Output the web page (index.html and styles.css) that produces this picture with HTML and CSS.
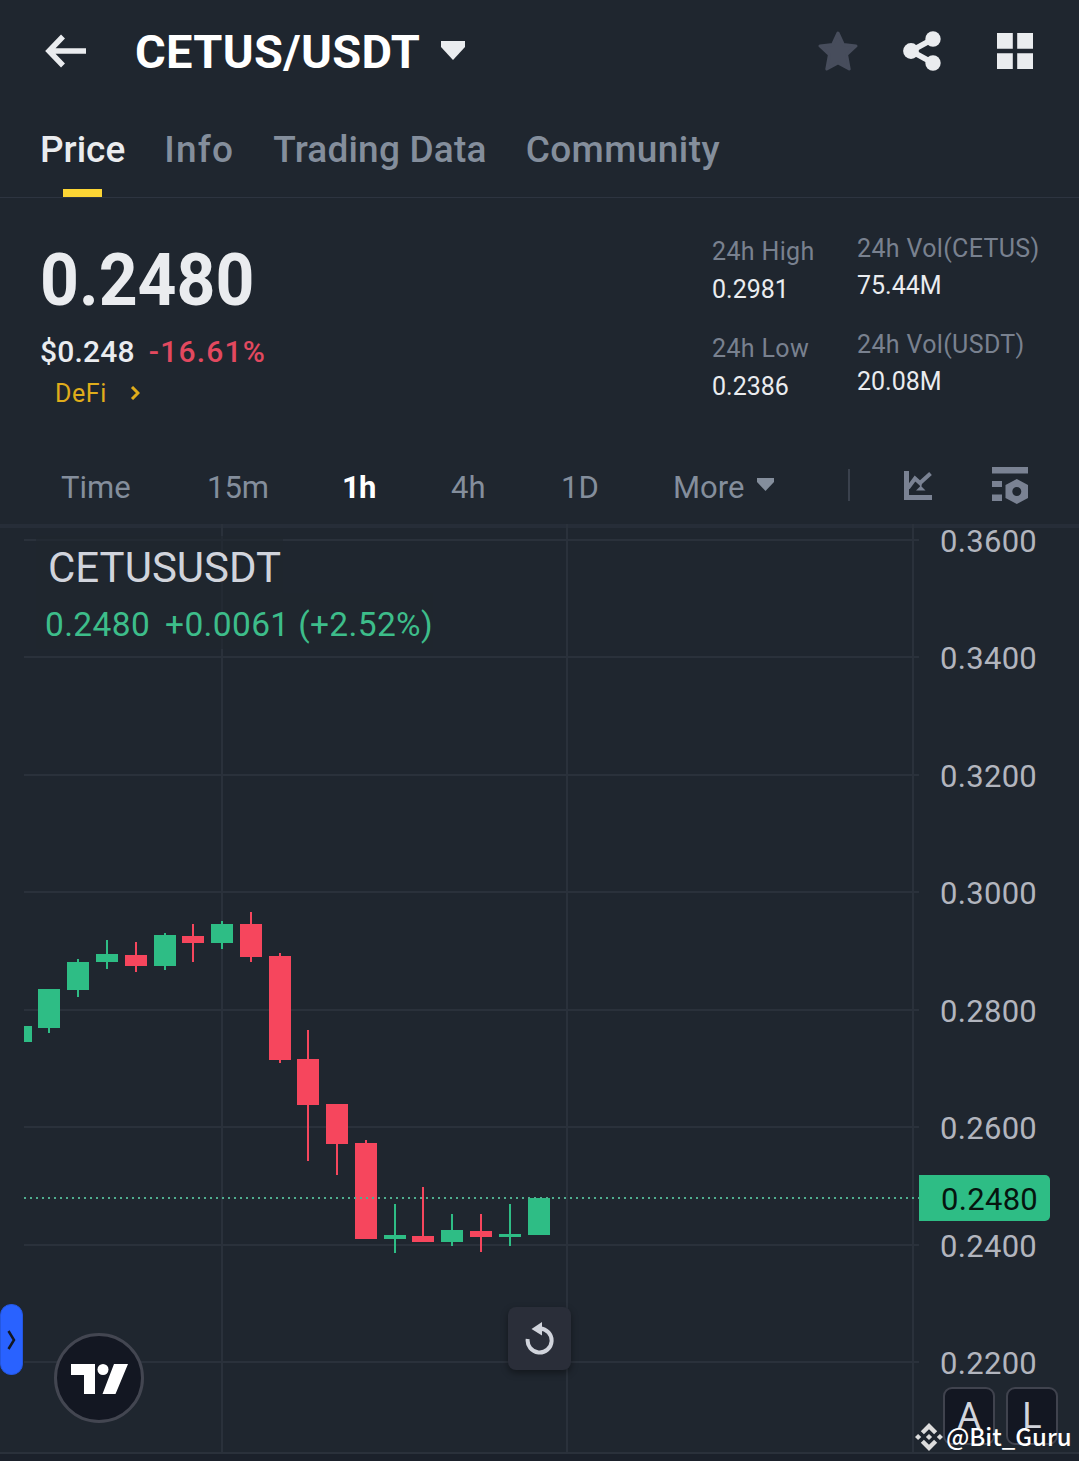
FILE: index.html
```html
<!DOCTYPE html>
<html lang="en">
<head>
    <meta charset="UTF-8">
    <meta name="viewport" content="width=device-width, initial-scale=1.0">
    <title>CETUS/USDT</title>
    <link rel="stylesheet" href="styles.css">
</head>
<body>

<header class="topbar">
    <svg class="back" width="42" height="34" viewBox="0 0 42 34">
        <path d="M18 2.500L4 17L18 31.500M4 17H41" fill="none" stroke="#eaecef" stroke-width="5.500"/>
    </svg>
    <h1>CETUS/USDT</h1>
    <svg class="caret" width="24" height="19" viewBox="0 0 24 19">
        <path d="M0 0H24V6L12 19L0 6Z" fill="#eaecef"/>
    </svg>
    <div class="actions">
        <svg width="40" height="40" viewBox="0 0 40 40">
            <path d="M20 2L25.300 13.500L38 15L28.600 23.700L31.200 38L20 32L8.800 38L11.400 23.700L2 15L14.700 13.500Z" fill="#474d5c" stroke="#474d5c" stroke-width="3" stroke-linejoin="round"/>
        </svg>
        <svg width="38" height="40" viewBox="0 0 38 40">
            <path d="M30 8L8 20L30 32" fill="none" stroke="#eaecef" stroke-width="5.500"/>
            <circle cx="8" cy="20" r="7.900" fill="#eaecef"/>
            <circle cx="30" cy="8" r="7.700" fill="#eaecef"/>
            <circle cx="30" cy="32" r="7.700" fill="#eaecef"/>
        </svg>
        <svg width="36" height="36" viewBox="0 0 36 36">
            <path d="M0 0H15.800V15.800H0ZM20.200 0H36V15.800H20.200ZM0 20.200H15.800V36H0ZM20.200 20.200H36V36H20.200Z" fill="#eaecef"/>
        </svg>
    </div>
</header>

<nav class="tabs">
    <a class="tab active">Price</a>
    <a class="tab info">Info</a>
    <a class="tab trading">Trading Data</a>
    <a class="tab community">Community</a>
</nav>

<section class="summary">
    <div class="quote">
        <div class="last"><span>0.2480</span></div>
        <div class="change"><span class="usd">$0.248</span><span class="down">-16.61%</span></div>
        <div class="tag">
            <span>DeFi</span>
            <svg width="10" height="14" viewBox="0 0 10 14">
                <path d="M2 1L8 7L2 13" fill="none" stroke="#e0ad1b" stroke-width="3"/>
            </svg>
        </div>
    </div>
    <dl class="stats">
        <div>
            <dt>24h High</dt>
            <dd>0.2981</dd>
        </div>
        <div>
            <dt>24h Low</dt>
            <dd>0.2386</dd>
        </div>
    </dl>
    <dl class="stats volume">
        <div>
            <dt>24h Vol(CETUS)</dt>
            <dd>75.44M</dd>
        </div>
        <div>
            <dt>24h Vol(USDT)</dt>
            <dd>20.08M</dd>
        </div>
    </dl>
</section>

<div class="toolbar">
    <div class="intervals">
        <span>Time</span>
        <span>15m</span>
        <span class="selected">1h</span>
        <span>4h</span>
        <span>1D</span>
        <span>More
            <svg class="more" width="17" height="13" viewBox="0 0 17 13"><path d="M0 0H17V4L8.500 13L0 4Z" fill="#848e9c"/></svg>
        </span>
    </div>
    <div class="tools">
        <i class="divider"></i>
        <svg class="indicator" width="28" height="29" viewBox="0 0 28 29">
            <path d="M0 0H5V24H28V29H0Z" fill="#7a8293"/>
            <path d="M4 17L11 7.500L16 12L26.500 2.500" fill="none" stroke="#7a8293" stroke-width="4"/>
            <path d="M15.500 11H18L17.500 15.500L21.500 19.500H12L16 15.500Z" fill="#7a8293"/>
        </svg>
        <svg width="36" height="37" viewBox="0 0 36 37">
            <path d="M0 0H36V6.500H0ZM0 14H10V20H0ZM0 27.500H10V34H0Z" fill="#7a8293"/>
            <path fill-rule="evenodd" d="M24.800 12L36 18V31L24.800 37L13.500 31V18ZM24.800 20A4.500 4.500 0 1 0 24.800 29A4.500 4.500 0 1 0 24.800 20Z" fill="#7a8293"/>
        </svg>
    </div>
</div>

<main class="chart">
    <svg class="plot" id="plot" width="919" height="937" viewBox="0 524 919 937"></svg>
    <div class="axis">
        <span>0.3600</span>
        <span>0.3400</span>
        <span>0.3200</span>
        <span>0.3000</span>
        <span>0.2800</span>
        <span>0.2600</span>
        <span>0.2400</span>
        <span>0.2200</span>
    </div>

    <div class="legend">
        <div class="symbol">CETUSUSDT</div>
        <div class="values"><span>0.2480</span><span>+0.0061 (+2.52%)</span></div>
    </div>
    <div class="price-tag">0.2480</div>

    <div class="drawer">
        <svg width="9" height="20" viewBox="0 0 9 20"><path d="M1.500 1L7 10L1.500 19" fill="none" stroke="#131722" stroke-width="2.500"/></svg>
    </div>
    <div class="tv-logo">
        <svg width="57" height="30" viewBox="0 0 57 30">
            <path d="M0 0H24V30H13V11H0ZM43 0H57L44.500 30H31.500Z" fill="#fff"/>
            <circle cx="32" cy="5.500" r="5.500" fill="#fff"/>
        </svg>
    </div>
    <div class="reset">
        <svg width="30" height="34" viewBox="0 0 30 34">
            <path d="M2.700 17A12 12 0 1 0 15 6.500" fill="none" stroke="#d1d4dc" stroke-width="4"/>
            <path d="M6.500 7L17 0V13.500Z" fill="#d1d4dc"/>
        </svg>
    </div>
    <div class="scale-modes"><span>A</span><span>L</span></div>
    <div class="watermark">
        <svg width="28" height="28" viewBox="0 0 28 28">
            <path d="M14 0L22.200 8.200L19.100 11.300L14 6.200L8.900 11.300L5.800 8.200ZM14 28L22.200 19.800L19.100 16.700L14 21.800L8.900 16.700L5.800 19.800ZM3.100 10.900L6.200 14L3.100 17.100L0 14ZM24.900 10.900L28 14L24.900 17.100L21.800 14ZM14 10.900L17.100 14L14 17.100L10.900 14Z" fill="#dcdcdc"/>
        </svg>
        <span>@Bit_Guru</span>
    </div>
</main>

<script>
    const up = '#2ebd85';
    const down = '#f6465d';

    // [center x, body top, body bottom, wick top, wick bottom, color]
    const candles = [
        [49, 989, 1028, 989, 1033, up],
        [78, 962, 990, 959, 997, up],
        [107, 954, 962, 940, 969, up],
        [136, 955, 966, 942, 972, down],
        [165, 935, 966, 933, 970, up],
        [193, 936, 943, 924, 962, down],
        [222, 924, 943, 921, 949, up],
        [251, 924, 957, 912, 962, down],
        [280, 956, 1060, 953, 1063, down],
        [308, 1059, 1105, 1030, 1161, down],
        [337, 1104, 1144, 1104, 1175, down],
        [366, 1143, 1239, 1140, 1239, down],
        [395, 1235, 1239, 1204, 1253, up],
        [423, 1236, 1242, 1187, 1242, down],
        [452, 1230, 1242, 1214, 1246, up],
        [481, 1231, 1237, 1214, 1252, down],
        [510, 1234, 1237, 1204, 1246, up],
        [539, 1198, 1235, 1198, 1235, up]
    ];

    let shapes = '';
    [540, 657, 775, 892, 1010, 1127, 1245, 1362].forEach(y => {
        shapes += `<rect x="24" y="${y - 1}" width="895" height="2" fill="#2a313b"/>`;
    });
    [222, 567, 913].forEach(x => {
        shapes += `<rect x="${x - 1}" y="524" width="2" height="931" fill="#2a313b"/>`;
    });

    // oldest candle is cut off by the left edge
    shapes += `<rect x="24" y="1026" width="8" height="16" fill="${up}"/>`;
    candles.forEach(([x, top, bottom, high, low, color]) => {
        shapes += `<rect x="${x - 1}" y="${high}" width="2" height="${low - high}" fill="${color}"/>`;
        shapes += `<rect x="${x - 11}" y="${top}" width="22" height="${bottom - top}" fill="${color}"/>`;
    });
    shapes += `<path d="M24 1198H919" stroke="#4fae8f" stroke-width="2" stroke-dasharray="2 4"/>`;

    document.getElementById('plot').innerHTML = shapes;
</script>

</body>
</html>
```
FILE: styles.css
```css
* {
    box-sizing: border-box;
}
body {
    margin: 0;
    width: 1079px;
    height: 1461px;
    overflow: hidden;
    background-color: #1f262f;
    color: #eaecef;
    font-family: Roboto, "Liberation Sans", sans-serif;
}
svg {
    display: block;
    flex: none;
}
.topbar {
    display: flex;
    align-items: center;
    height: 101px;
    padding: 0 46px 0 45px;
}
h1 {
    margin: 3px 0 0 48px;
    color: #fff;
    font-size: 47px;
    font-weight: 700;
    line-height: 60px;
    letter-spacing: 0.3px;
}
.caret {
    margin: -1px 0 0 21px;
}
.actions {
    display: flex;
    align-items: center;
    margin-left: auto;
}
.actions svg:nth-child(2) {
    margin: 0 56px 0 45px;
}
.tabs {
    display: flex;
    height: 97px;
    padding-left: 40px;
    border-bottom: 1px solid #2d3440;
    color: #848e9c;
    font-size: 37px;
    font-weight: 500;
    line-height: 97px;
}
.tab {
    position: relative;
    margin-right: 39px;
    white-space: nowrap;
}
.tab.active {
    color: #eaecef;
}
.tab.active::after {
    content: "";
    position: absolute;
    left: 23px;
    bottom: 0;
    width: 39px;
    height: 8px;
    background: #fcd535;
}
.info {
    letter-spacing: 1.200px;
}
.trading {
    letter-spacing: 0.200px;
}
.community {
    letter-spacing: 0.400px;
}
.summary {
    display: flex;
    height: 249px;
}
.quote {
    width: 712px;
    padding: 40px 0 0 40px;
}
.last {
    font-size: 73px;
    font-weight: 700;
    line-height: 84px;
}
.last span {
    display: inline-block;
    transform: scaleX(0.93);
    transform-origin: left;
}
.change {
    display: flex;
    margin-top: 9px;
    font-size: 30px;
    font-weight: 500;
    line-height: 41px;
    letter-spacing: 0.200px;
}
.down {
    margin-left: 14px;
    color: #e2495f;
    letter-spacing: 1.200px;
}
.tag {
    display: flex;
    align-items: center;
    gap: 23px;
    margin-top: 1px;
    padding-left: 15px;
    color: #e0ad1b;
    font-size: 25px;
    line-height: 41px;
    letter-spacing: 0.600px;
}
.tag svg {
    margin-top: -2px;
}
.stats {
    width: 145px;
    margin: 0;
    padding-top: 35px;
    font-size: 25px;
    line-height: 38px;
    white-space: nowrap;
}
.stats div + div {
    margin-top: 21px;
}
.stats.volume {
    width: auto;
    padding-top: 32px;
}
.stats.volume dt {
    line-height: 37px;
}
.stats dt {
    color: #79818f;
    letter-spacing: 0.350px;
}
.stats dd {
    margin: 0;
}
.toolbar {
    display: flex;
    height: 77px;
    color: #848e9c;
    font-size: 31px;
    line-height: 82px;
}
.intervals {
    display: grid;
    grid-template-columns: 146px 135px 109px 110px 112px 175px;
    padding-left: 61px;
    white-space: nowrap;
}
.selected {
    color: #fff;
    font-weight: 700;
    letter-spacing: -0.800px;
}
.more {
    display: inline-block;
    margin-left: 5px;
    vertical-align: 7px;
}
.tools {
    display: flex;
    align-items: center;
    height: 76px;
}
.divider {
    width: 2px;
    height: 32px;
    background: #3a414d;
}
.indicator {
    margin: 0 60px 0 54px;
}
.chart {
    position: relative;
    display: flex;
    height: 937px;
    border-top: 4px solid #262d38;
}
.chart::after {
    content: "";
    position: absolute;
    left: 0;
    right: 0;
    bottom: 0;
    height: 7px;
    border-top: 2px solid #2a313b;
    background: #1b212b;
}
.plot {
    margin-top: -4px;
}
.axis {
    display: flex;
    flex-direction: column;
    height: 939.600px;
    margin-top: -45.100px;
    padding-left: 21px;
    color: #b2b5be;
    font-size: 31px;
    letter-spacing: 0.300px;
}
.axis span {
    height: 117.450px;
    line-height: 117.450px;
}
.legend {
    position: absolute;
    left: 36px;
    top: 8px;
}
.symbol {
    width: 247px;
    padding: 7px 0 0 12px;
    background: rgba(31, 38, 47, 0.6);
    color: #d1d4dc;
    font-size: 42px;
    line-height: 50px;
}
.values {
    display: flex;
    gap: 15px;
    height: 56px;
    padding-left: 9px;
    background: rgba(31, 38, 47, 0.6);
    color: #3dbd8a;
    font-size: 33.500px;
    line-height: 64px;
    letter-spacing: 0.350px;
    white-space: nowrap;
}
.price-tag {
    position: absolute;
    left: 919px;
    top: 647px;
    width: 131px;
    height: 46px;
    padding-left: 22px;
    border-radius: 0 5px 5px 0;
    background: #2ebd85;
    color: #06150f;
    font-size: 31px;
    line-height: 49px;
    letter-spacing: 0.300px;
}
.drawer {
    position: absolute;
    left: 0;
    top: 776px;
    display: flex;
    align-items: center;
    justify-content: center;
    width: 23px;
    height: 71px;
    border: 1px solid #2457e0;
    border-radius: 11px;
    background: #2962ff;
}
.tv-logo {
    position: absolute;
    left: 54px;
    top: 805px;
    display: flex;
    align-items: center;
    justify-content: center;
    width: 90px;
    height: 90px;
    padding-top: 2px;
    border: 3px solid #434651;
    border-radius: 50%;
    background: #131722;
}
.reset {
    position: absolute;
    left: 508px;
    top: 779px;
    display: flex;
    align-items: center;
    justify-content: center;
    width: 63px;
    height: 63px;
    border-radius: 8px;
    background: #2a2e39;
    box-shadow: 0 3px 7px rgba(0, 0, 0, 0.4);
}
.scale-modes {
    position: absolute;
    left: 943px;
    top: 859px;
    display: flex;
    gap: 11px;
}
.scale-modes span {
    width: 52px;
    height: 58px;
    border: 2px solid #40434e;
    border-radius: 9px;
    background: #131722;
    color: #d1d4dc;
    font-size: 36px;
    line-height: 54px;
    text-align: center;
}
.watermark {
    position: absolute;
    z-index: 1;
    left: 915px;
    top: 889px;
    display: flex;
    align-items: center;
    gap: 3px;
    height: 40px;
    color: #fff;
    font-family: "Noto Sans CJK SC", "Noto Sans", sans-serif;
    font-size: 24px;
    font-weight: 500;
    line-height: 38px;
}
.watermark span {
    margin-top: -2px;
}
```
